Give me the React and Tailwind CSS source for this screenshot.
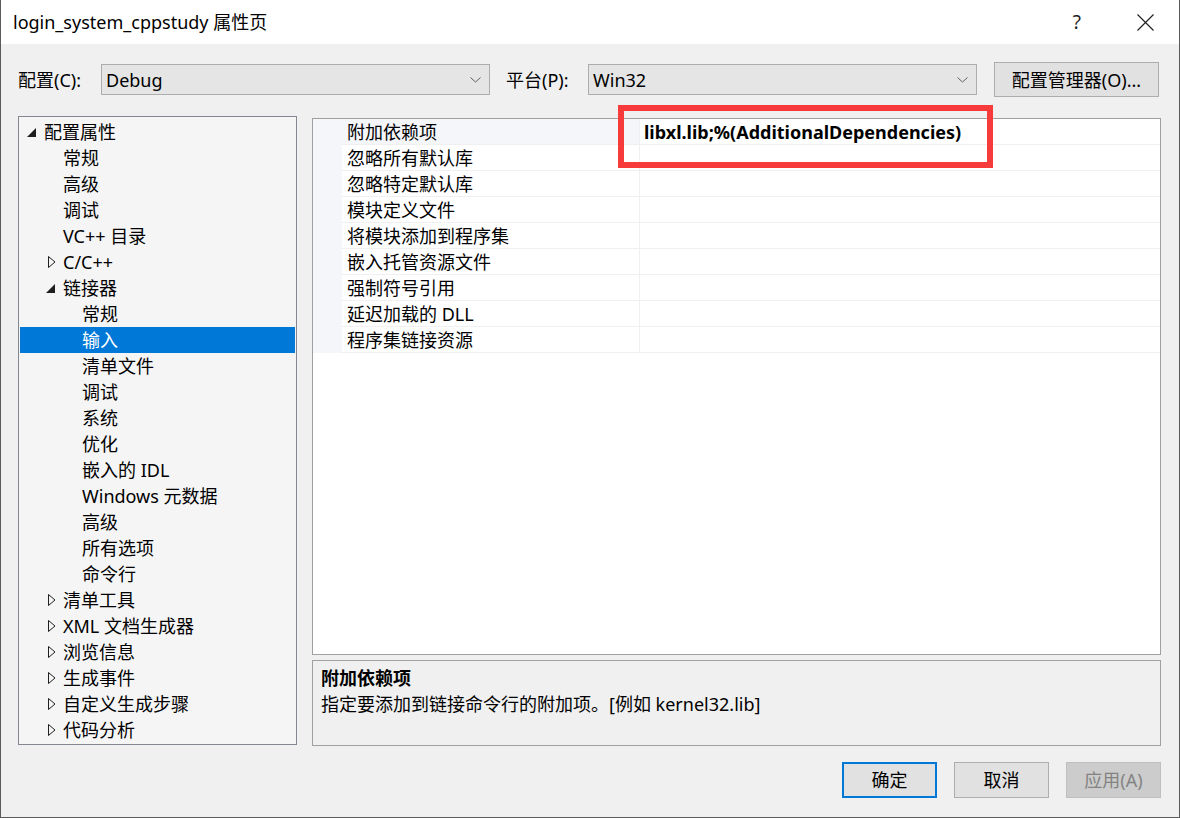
import { useState } from 'react'

const FONT = { fontFamily: '"Noto Sans", "Noto Sans CJK SC", sans-serif' }

const treeItems = [
  { label: '配置属性', level: 0, state: 'open' },
  { label: '常规', level: 1 },
  { label: '高级', level: 1 },
  { label: '调试', level: 1 },
  { label: 'VC++ 目录', level: 1 },
  { label: 'C/C++', level: 1, state: 'closed' },
  { label: '链接器', level: 1, state: 'open' },
  { label: '常规', level: 2 },
  { label: '输入', level: 2 },
  { label: '清单文件', level: 2 },
  { label: '调试', level: 2 },
  { label: '系统', level: 2 },
  { label: '优化', level: 2 },
  { label: '嵌入的 IDL', level: 2 },
  { label: 'Windows 元数据', level: 2 },
  { label: '高级', level: 2 },
  { label: '所有选项', level: 2 },
  { label: '命令行', level: 2 },
  { label: '清单工具', level: 1, state: 'closed' },
  { label: 'XML 文档生成器', level: 1, state: 'closed' },
  { label: '浏览信息', level: 1, state: 'closed' },
  { label: '生成事件', level: 1, state: 'closed' },
  { label: '自定义生成步骤', level: 1, state: 'closed' },
  { label: '代码分析', level: 1, state: 'closed' },
]

const indent = ['pl-[5px]', 'pl-[24px]', 'pl-[43px]']

const properties = [
  { name: '附加依赖项', value: 'libxl.lib;%(AdditionalDependencies)' },
  { name: '忽略所有默认库', value: '' },
  { name: '忽略特定默认库', value: '' },
  { name: '模块定义文件', value: '' },
  { name: '将模块添加到程序集', value: '' },
  { name: '嵌入托管资源文件', value: '' },
  { name: '强制符号引用', value: '' },
  { name: '延迟加载的 DLL', value: '' },
  { name: '程序集链接资源', value: '' },
]

function Expander({ state }) {
  if (state === 'open') {
    return (
      <svg width="9" height="9" viewBox="0 0 9 9" className="ml-[2px]">
        <polygon points="9,0 9,9 0,9" fill="#1e1e1e" />
      </svg>
    )
  }
  if (state === 'closed') {
    return (
      <svg width="8" height="12" viewBox="0 0 8 12" className="ml-[4px]">
        <polygon points="0.5,0.5 7,6 0.5,11.5" fill="none" stroke="#1e1e1e" strokeWidth="1" />
      </svg>
    )
  }
  return null
}

function Chevron() {
  return (
    <svg width="11" height="6" viewBox="0 0 11 6" className="mr-[8px]">
      <polyline points="0.5,0.5 5.5,5 10.5,0.5" fill="none" stroke="#606060" strokeWidth="1" />
    </svg>
  )
}

function Combo({ value }) {
  return (
    <div className="w-[389px] h-[31px] bg-[#e5e5e5] border border-[#adadad] flex items-center justify-between">
      <span className="pl-[4px] text-[18px] leading-none text-black">{value}</span>
      <Chevron />
    </div>
  )
}

export default function App() {
  const [selected, setSelected] = useState(8)

  return (
    <div
      className="w-[1180px] h-[818px] bg-[#f0f0f0] border-x border-b border-[#5a5a5a] flex flex-col relative overflow-hidden text-black"
      style={FONT}
    >
      {/* title bar */}
      <div className="h-[44px] bg-white flex items-center justify-between shrink-0">
        <span className="pl-[12px] text-[18px] leading-none">login_system_cppstudy 属性页</span>
        <div className="flex items-center">
          <span className="text-[19px] leading-none text-[#1e1e1e] mr-[56px]">?</span>
          <svg width="17" height="17" viewBox="0 0 17 17" className="mr-[25px]">
            <path d="M0.5 0.5 L16.5 16.5 M16.5 0.5 L0.5 16.5" stroke="#1e1e1e" strokeWidth="1.1" />
          </svg>
        </div>
      </div>

      <div className="flex-1 flex flex-col pl-[17px] pr-[18px]">
        {/* configuration / platform row */}
        <div className="mt-[18px] h-[35px] flex items-center">
          <span className="w-[83px] text-[18px] leading-none">配置(C):</span>
          <Combo value="Debug" />
          <span className="ml-[16px] w-[82px] text-[18px] leading-none">平台(P):</span>
          <Combo value="Win32" />
          <button className="ml-[17px] w-[165px] h-[35px] bg-[#e1e1e1] border border-[#adadad] text-[18px] leading-none">
            配置管理器(O)...
          </button>
        </div>

        <div className="mt-[19px] flex items-start">
          {/* category tree */}
          <div className="w-[279px] h-[629px] bg-[#f5f5f5] border border-[#828790] p-[1px] pt-[2px]">
            {treeItems.map((item, i) => (
              <div
                key={i}
                onClick={() => setSelected(i)}
                className={`h-[26px] flex items-center ${indent[item.level]} ${
                  selected === i ? 'bg-[#0078d7] text-white' : ''
                }`}
              >
                <div className="w-[19px] flex items-center">
                  <Expander state={item.state} />
                </div>
                <span className="text-[18px] leading-none whitespace-nowrap">{item.label}</span>
              </div>
            ))}
          </div>

          <div className="ml-[15px] mt-[2px] w-[849px] flex flex-col">
            {/* property grid */}
            <div className="h-[537px] bg-white border border-[#a0a0a0]">
              {properties.map((p, i) => (
                <div key={p.name} className="h-[26px] flex">
                  <div className="w-[29px] bg-[#f4f6fa]" />
                  <div
                    className={`w-[298px] flex items-center pl-[5px] border-b border-r border-[#f0f0f0] ${
                      i === 0 ? 'bg-[#f4f6fa]' : ''
                    }`}
                  >
                    <span className="text-[18px] leading-none whitespace-nowrap">{p.name}</span>
                  </div>
                  <div className="flex-1 flex items-center pl-[4px] border-b border-[#f0f0f0]">
                    <span className="text-[18px] leading-none font-bold whitespace-nowrap">{p.value}</span>
                  </div>
                </div>
              ))}
            </div>

            {/* description */}
            <div className="mt-[5px] h-[86px] border border-[#a0a0a0] bg-[#f0f0f0] pl-[8px] pt-[4px]">
              <div className="h-[26px] flex items-center text-[18px] leading-none font-bold">附加依赖项</div>
              <div className="h-[26px] flex items-center text-[18px] leading-none">
                指定要添加到链接命令行的附加项。[例如 kernel32.lib]
              </div>
            </div>
          </div>
        </div>

        {/* dialog buttons */}
        <div className="mt-[16px] flex justify-end">
          <button className="w-[95px] h-[36px] bg-[#e1e1e1] border-2 border-[#0078d7] text-[18px] leading-none">
            确定
          </button>
          <button className="ml-[17px] w-[95px] h-[36px] bg-[#e1e1e1] border border-[#adadad] text-[18px] leading-none">
            取消
          </button>
          <button className="ml-[17px] w-[95px] h-[36px] bg-[#cccccc] border border-[#bfbfbf] text-[18px] leading-none text-[#838383]">
            应用(A)
          </button>
        </div>
      </div>

      {/* annotation box */}
      <div className="absolute left-[617px] top-[105px] w-[375px] h-[63px] border-[6px] border-[#f73b3b] pointer-events-none" />
    </div>
  )
}
